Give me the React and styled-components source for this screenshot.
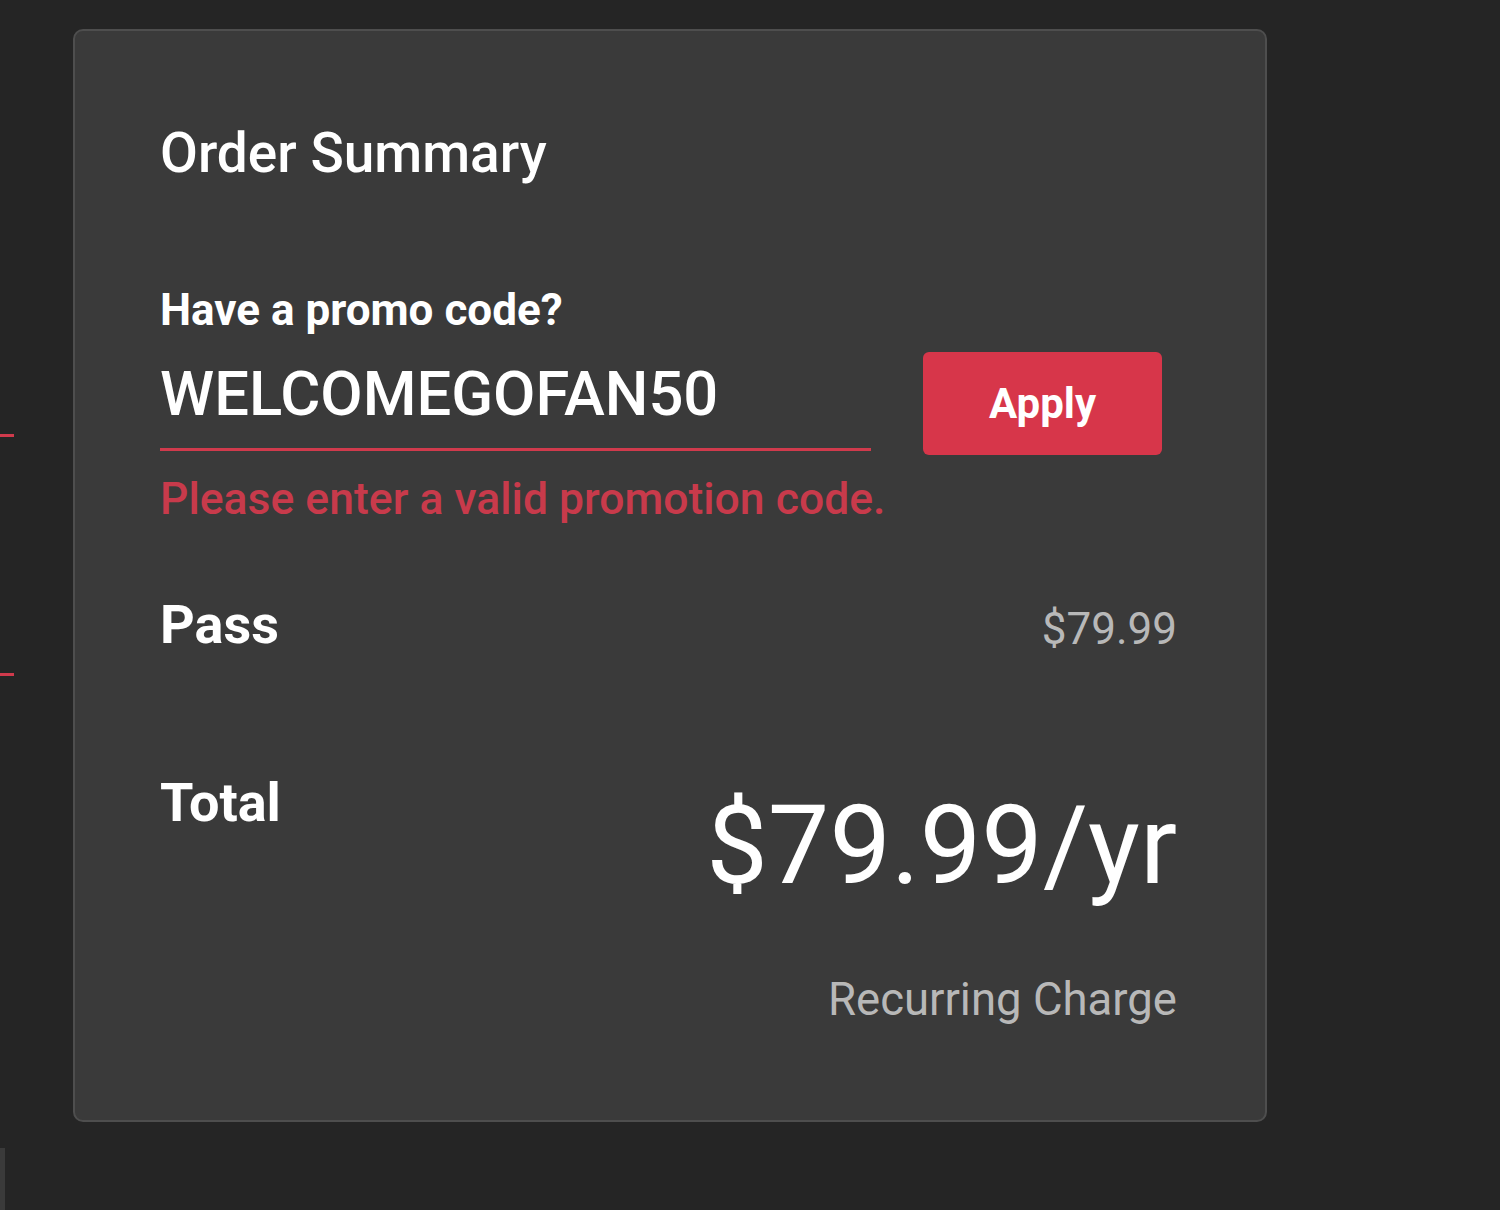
import React from "react";
import styled, { createGlobalStyle } from "styled-components";

const Global = createGlobalStyle`
  html, body { margin: 0; padding: 0; background: #252525; }
  body { font-family: Roboto, "Noto Sans", Arial, sans-serif; }
  * { box-sizing: border-box; }
`;

const Page = styled.div`
  display: flex;
  align-items: flex-start;
  min-height: 1210px;
  padding-top: 29px;
  background: #252525;
`;

const LeftStrip = styled.div`
  width: 14px;
  display: flex;
  flex-direction: column;
  align-items: flex-start;
  flex-shrink: 0;
`;

const FieldLine = styled.div`
  width: 14px;
  height: 3px;
  margin-top: ${(p) => p.$top}px;
  background: #d03a4c;
`;

const GhostBlock = styled.div`
  width: 5px;
  height: 62px;
  margin-top: ${(p) => p.$top}px;
  background: #3a3a3a;
`;

const Card = styled.section`
  margin-left: 59px;
  width: 1194px;
  height: 1093px;
  background: #3a3a3a;
  border: 2px solid #4e4e4e;
  border-radius: 10px;
  padding: 90px 88px 0 85px;
  display: flex;
  flex-direction: column;
  color: #ffffff;
`;

const Title = styled.h2`
  margin: 0;
  font-size: 55px;
  line-height: 65px;
  font-weight: 500;
  color: #ffffff;
`;

const PromoLabel = styled.div`
  margin-top: 98px;
  font-size: 44px;
  line-height: 52px;
  font-weight: 700;
`;

const PromoRow = styled.div`
  display: flex;
  align-items: flex-start;
  gap: 52px;
`;

const InputWrap = styled.div`
  width: 711px;
  display: flex;
  flex-direction: column;
`;

const CodeInput = styled.input`
  width: 100%;
  height: 111px;
  margin-top: 4px;
  padding: 0;
  background: transparent;
  border: none;
  border-bottom: 3px solid #d03a4c;
  outline: none;
  color: #ffffff;
  font-family: Roboto, "Noto Sans", Arial, sans-serif;
  font-size: 61.5px;
  font-weight: 500;
`;

const ErrorText = styled.div`
  margin-top: 22px;
  font-size: 44.5px;
  line-height: 52px;
  font-weight: 500;
  color: #c83a4b;
  white-space: nowrap;
`;

const ApplyButton = styled.button`
  width: 239px;
  height: 103px;
  margin-top: 16px;
  border: none;
  border-radius: 6px;
  background: #d7364a;
  color: #ffffff;
  font-family: Roboto, "Noto Sans", Arial, sans-serif;
  font-size: 42px;
  font-weight: 700;
  cursor: pointer;
`;

const LineRow = styled.div`
  display: flex;
  justify-content: space-between;
  align-items: flex-start;
  margin-top: ${(p) => p.$top}px;
`;

const RowLabel = styled.div`
  font-size: 54px;
  line-height: 64px;
  font-weight: 700;
`;

const PassPrice = styled.div`
  margin-top: 10px;
  font-size: 44px;
  line-height: 52px;
  font-weight: 400;
  color: #b8b8b8;
`;

const TotalBlock = styled.div`
  display: flex;
  flex-direction: column;
  align-items: flex-end;
`;

const TotalPrice = styled.div`
  margin-top: 11px;
  font-size: 109.5px;
  line-height: 128px;
  font-weight: 400;
  color: #ffffff;
`;

const Recurring = styled.div`
  margin-top: 63px;
  font-size: 45.5px;
  line-height: 54px;
  font-weight: 400;
  color: #b8b8b8;
`;

export default function App() {
  return (
    <>
      <Global />
      <Page>
        <LeftStrip>
          <FieldLine $top={405} />
          <FieldLine $top={236} />
          <GhostBlock $top={472} />
        </LeftStrip>
        <Card>
          <Title>Order Summary</Title>
          <PromoLabel>Have a promo code?</PromoLabel>
          <PromoRow>
            <InputWrap>
              <CodeInput defaultValue="WELCOMEGOFAN50" aria-label="Promo code" />
              <ErrorText>Please enter a valid promotion code.</ErrorText>
            </InputWrap>
            <ApplyButton>Apply</ApplyButton>
          </PromoRow>
          <LineRow $top={68}>
            <RowLabel>Pass</RowLabel>
            <PassPrice>$79.99</PassPrice>
          </LineRow>
          <LineRow $top={114}>
            <RowLabel>Total</RowLabel>
            <TotalBlock>
              <TotalPrice>$79.99/yr</TotalPrice>
              <Recurring>Recurring Charge</Recurring>
            </TotalBlock>
          </LineRow>
        </Card>
      </Page>
    </>
  );
}
